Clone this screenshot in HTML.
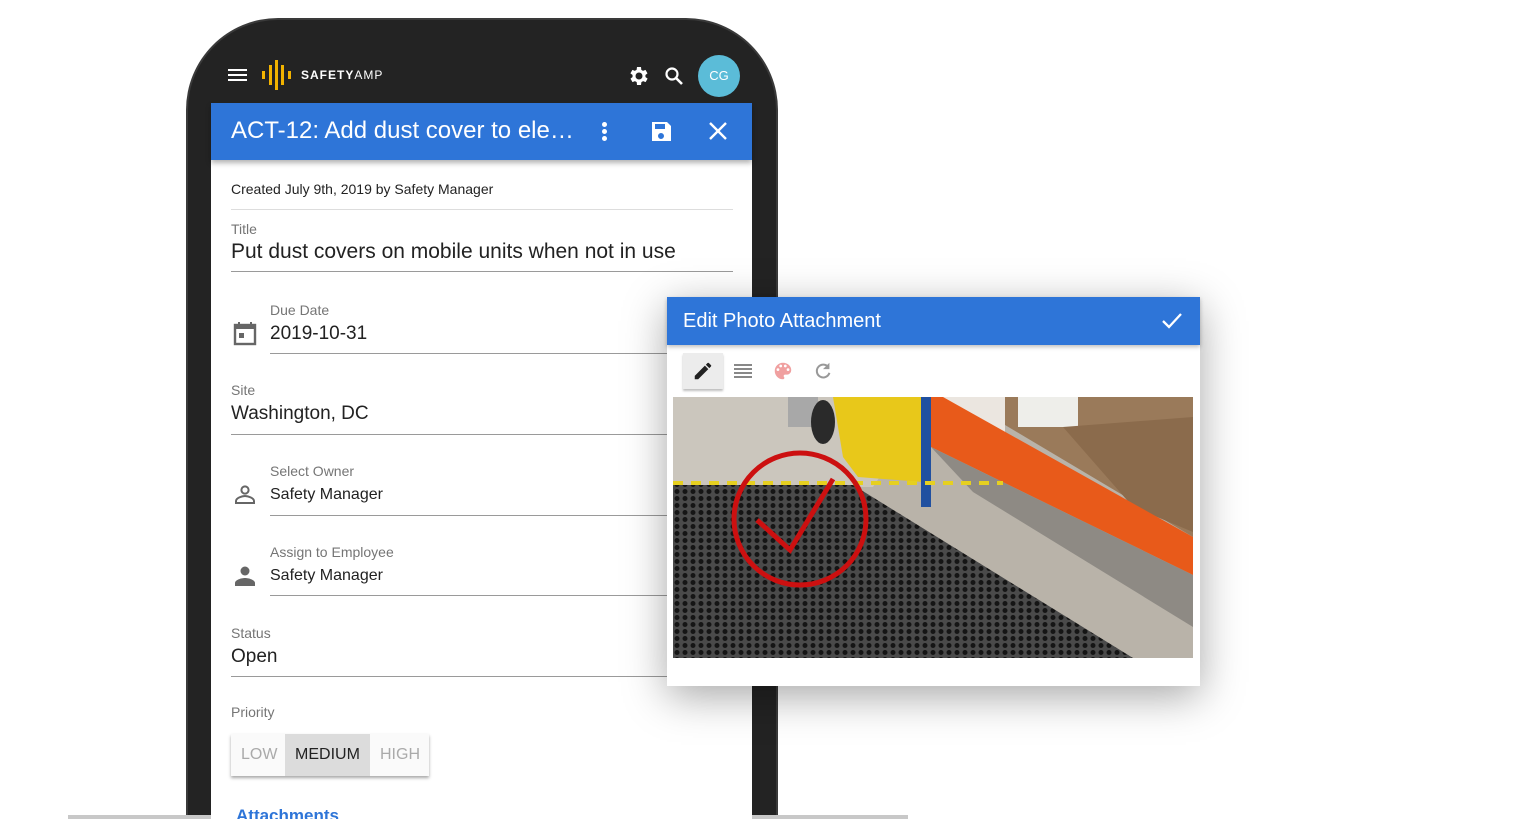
<!DOCTYPE html>
<html style="width:1527px;height:819px;overflow:hidden"><head><meta charset="utf-8"><style>
*{margin:0;padding:0;box-sizing:border-box}
body{width:1527px;height:819px;background:#fff;position:relative;overflow:hidden;font-family:"Liberation Sans",sans-serif}
.a{position:absolute}
.lbl{color:#757575;font-size:14px}
.val{color:#222;font-size:19px}
.line{height:1px;background:#9a9a9a}
</style></head><body>
<div class="a" style="left:186px;top:18px;width:592px;height:801px;background:#232323;border-radius:92px 92px 0 0;border:2px solid #3a3a3a;border-bottom:none"></div>
<div class="a" style="left:68px;top:815px;width:840px;height:4px;background:#c8c8c8"></div>
<!-- header -->
<div class="a" style="left:228px;top:69px;width:19px;height:2px;background:#fff;box-shadow:0 5px 0 #fff,0 10px 0 #fff"></div>
<svg class="a" style="left:260px;top:60px" width="34" height="30"><g fill="#f2b300"><rect x="2" y="11" width="3" height="8"/><rect x="9" y="5" width="3" height="20"/><rect x="15" y="0" width="3" height="30"/><rect x="21" y="5" width="3" height="20"/><rect x="28" y="11" width="3" height="8"/></g></svg>
<div class="a" style="left:301px;top:68px;color:#fff;font-size:12px;font-weight:bold;letter-spacing:1px">SAFETY<span style="font-weight:normal">AMP</span></div>
<svg class="a" style="left:626px;top:64px" width="24" height="24" viewBox="0 0 24 24"><path fill="#fff" d="M19.4 13a7.5 7.5 0 000-2l2.1-1.6-2-3.5-2.5 1a7 7 0 00-1.7-1L15 3h-4l-.4 2.9a7 7 0 00-1.7 1l-2.5-1-2 3.5L6.6 11a7.5 7.5 0 000 2l-2.1 1.6 2 3.5 2.5-1c.5.4 1.1.7 1.7 1L11 21h4l.4-2.9c.6-.3 1.2-.6 1.7-1l2.5 1 2-3.5zM13 15.5a3.5 3.5 0 110-7 3.5 3.5 0 010 7z"/></svg>
<svg class="a" style="left:662px;top:64px" width="24" height="24" viewBox="0 0 24 24"><circle cx="10" cy="10" r="5.5" fill="none" stroke="#fff" stroke-width="2.2"/><path d="M14 14l6 6" stroke="#fff" stroke-width="2.6"/></svg>
<div class="a" style="left:698px;top:55px;width:42px;height:42px;border-radius:50%;background:#5bbcd8;color:#fff;font-size:13px;text-align:center;line-height:42px">CG</div>
<!-- screen -->
<div class="a" style="left:211px;top:103px;width:541px;height:716px;background:#fff"></div>
<div class="a" style="left:211px;top:103px;width:541px;height:57px;background:#2e75d8;box-shadow:0 3px 5px rgba(0,0,0,.3)"></div>
<div class="a" style="left:231px;top:117px;color:#fff;font-size:24px">ACT-12: Add dust cover to ele…</div>
<div class="a" style="left:602px;top:122px;width:5px;height:5px;border-radius:50%;background:#fff;box-shadow:0 7px 0 #fff,0 14px 0 #fff"></div>
<svg class="a" style="left:649px;top:119px" width="24" height="24" viewBox="0 0 24 24"><path fill="#fff" d="M3 3h15l4 4v15H3zM6 5v5h10V5zm6 9a3 3 0 100 6 3 3 0 000-6z"/></svg>
<svg class="a" style="left:708px;top:121px" width="20" height="20"><path d="M2 2l16 16M18 2L2 18" stroke="#fff" stroke-width="2.4"/></svg>
<div class="a" style="left:231px;top:181px;font-size:14px;color:#222">Created July 9th, 2019 by Safety Manager</div>
<div class="a line" style="left:231px;top:209px;width:502px;background:#ddd"></div>
<div class="a lbl" style="left:231px;top:221px">Title</div>
<div class="a val" style="left:231px;top:240px;font-size:21px">Put dust covers on mobile units when not in use</div>
<div class="a line" style="left:231px;top:271px;width:502px"></div>
<div class="a lbl" style="left:270px;top:302px">Due Date</div>
<svg class="a" style="left:233px;top:320px" width="24" height="26" viewBox="0 0 24 26"><path d="M6 2v4M18 2v4" stroke="#666" stroke-width="2"/><rect x="2" y="5" width="20" height="19" fill="none" stroke="#666" stroke-width="2.4"/><rect x="2" y="5" width="20" height="4" fill="#666"/><rect x="6" y="13" width="5" height="5" fill="#666"/></svg>
<div class="a val" style="left:270px;top:323px">2019-10-31</div>
<div class="a line" style="left:270px;top:353px;width:400px"></div>
<div class="a lbl" style="left:231px;top:382px">Site</div>
<div class="a val" style="left:231px;top:403px">Washington, DC</div>
<div class="a line" style="left:231px;top:434px;width:440px"></div>
<div class="a lbl" style="left:270px;top:463px">Select Owner</div>
<svg class="a" style="left:234px;top:485px" width="22" height="20" viewBox="0 0 22 20"><circle cx="11" cy="5" r="3.6" fill="none" stroke="#666" stroke-width="2"/><path d="M2 18v-2c0-3 6-5 9-5s9 2 9 5v2z" fill="none" stroke="#666" stroke-width="2"/></svg>
<div class="a val" style="left:270px;top:486px;font-size:16px">Safety Manager</div>
<div class="a line" style="left:270px;top:515px;width:400px"></div>
<div class="a lbl" style="left:270px;top:544px">Assign to Employee</div>
<svg class="a" style="left:234px;top:566px" width="22" height="20" viewBox="0 0 22 20"><circle cx="11" cy="5" r="4.5" fill="#666"/><path d="M1 20v-3c0-3 6-5 10-5s10 2 10 5v3z" fill="#666"/></svg>
<div class="a val" style="left:270px;top:567px;font-size:16px">Safety Manager</div>
<div class="a line" style="left:270px;top:595px;width:400px"></div>
<div class="a lbl" style="left:231px;top:625px">Status</div>
<div class="a val" style="left:231px;top:646px">Open</div>
<div class="a line" style="left:231px;top:676px;width:440px"></div>
<div class="a lbl" style="left:231px;top:704px">Priority</div>
<div class="a" style="left:231px;top:734px;width:198px;height:42px;background:#fafafa;box-shadow:0 2px 3px rgba(0,0,0,.35);font-size:16px;line-height:42px">
<span class="a" style="left:10px;color:#aaa">LOW</span>
<span class="a" style="left:54px;width:85px;height:42px;background:#dcdcdc;color:#222;text-align:center">MEDIUM</span>
<span class="a" style="left:149px;color:#aaa">HIGH</span></div>
<div class="a" style="left:236px;top:806px;color:#2e75d8;font-size:17px;font-weight:bold">Attachments</div>
<!-- dialog -->
<div class="a" style="left:667px;top:297px;width:533px;height:389px;background:#fff;box-shadow:0 10px 40px rgba(0,0,0,.35)"></div>
<div class="a" style="left:667px;top:297px;width:533px;height:48px;background:#2e75d8;box-shadow:0 2px 4px rgba(0,0,0,.25)"></div>
<div class="a" style="left:683px;top:310px;color:#fff;font-size:20px">Edit Photo Attachment</div>
<svg class="a" style="left:1161px;top:311px" width="22" height="20"><path d="M2 10l6 6L20 3" fill="none" stroke="#fff" stroke-width="2.3"/></svg>
<div class="a" style="left:683px;top:353px;width:40px;height:36px;background:#ececec;box-shadow:0 2px 2px rgba(0,0,0,.25)"></div>
<svg class="a" style="left:692px;top:360px" width="22" height="22" viewBox="0 0 24 24"><path fill="#222" d="M3 17.25V21h3.75L17.8 9.94l-3.75-3.75zM20.7 7.04a1 1 0 000-1.41l-2.34-2.34a1 1 0 00-1.41 0l-1.83 1.83 3.75 3.75z"/></svg>
<div class="a" style="left:734px;top:364px;width:18px;height:2px;background:#888;box-shadow:0 4px 0 #888,0 8px 0 #888,0 12px 0 #888"></div>
<svg class="a" style="left:772px;top:360px" width="22" height="22" viewBox="0 0 24 24"><path fill="#f0a0a0" d="M12 3a9 9 0 000 18c.8 0 1.5-.7 1.5-1.5 0-.4-.1-.7-.4-1-.2-.3-.4-.6-.4-1 0-.8.7-1.5 1.5-1.5H16a5 5 0 005-5c0-4.4-4-8-9-8zm-5.5 9a1.5 1.5 0 110-3 1.5 1.5 0 010 3zm3-4a1.5 1.5 0 110-3 1.5 1.5 0 010 3zm5 0a1.5 1.5 0 110-3 1.5 1.5 0 010 3zm3 4a1.5 1.5 0 110-3 1.5 1.5 0 010 3z"/></svg>
<svg class="a" style="left:812px;top:360px" width="22" height="22" viewBox="0 0 24 24"><path fill="none" stroke="#999" stroke-width="2.2" d="M18 8A7 7 0 1019 14"/><path fill="#999" d="M19 3v7h-7z"/></svg>
<svg class="a" style="left:673px;top:397px" width="520" height="261" viewBox="0 0 520 261">
<defs><pattern id="p" width="8" height="7" patternUnits="userSpaceOnUse"><rect width="8" height="7" fill="#4a4a4a"/><circle cx="4" cy="3.5" r="2.5" fill="#151515"/></pattern></defs>
<rect width="520" height="261" fill="#b9b3a9"/>
<polygon points="0,0 260,0 200,90 0,90" fill="#cbc6bd"/>
<rect x="115" y="0" width="30" height="30" fill="#a8a8a8"/>
<polygon points="160,0 255,0 250,85 185,80 170,60" fill="#e8c81a"/>
<ellipse cx="150" cy="25" rx="12" ry="22" fill="#2a2a2a"/>
<polygon points="285,0 520,0 520,140" fill="#9a7a5a"/>
<rect x="262" y="0" width="70" height="40" fill="#ebe6e0"/>
<rect x="345" y="0" width="60" height="30" fill="#eeeeea"/>
<polygon points="390,30 520,20 520,135 460,110" fill="#8b6b4c"/>
<polygon points="258,0 270,0 520,140 520,178 258,50" fill="#e85a1a"/>
<polygon points="258,50 520,178 520,230 300,95" fill="#8e8a84"/>
<rect x="248" y="0" width="10" height="110" fill="#2050a0"/>
<polygon points="0,88 180,88 460,261 0,261" fill="url(#p)"/>
<path d="M0 86H330" stroke="#e6d020" stroke-width="4" stroke-dasharray="10 8"/>
<circle cx="127" cy="122" r="66" fill="none" stroke="#cc1010" stroke-width="5"/>
<path d="M84 123l33 30 43-71" fill="none" stroke="#cc1010" stroke-width="5"/>
</svg>
</body></html>
